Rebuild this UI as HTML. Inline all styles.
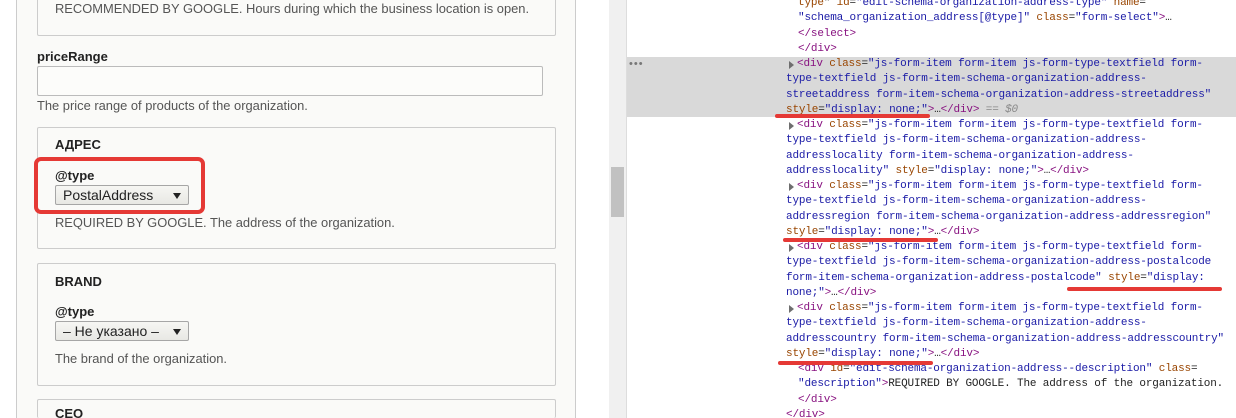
<!DOCTYPE html>
<html><head><meta charset="utf-8"><style>
*{margin:0;padding:0;box-sizing:border-box}
html,body{width:1236px;height:418px;overflow:hidden}
body{background:#fff;position:relative;font-family:"Liberation Sans","DejaVu Sans",sans-serif}
.abs{position:absolute}
#left{left:16px;top:0;width:560px;height:418px;background:#fafaf8;border-left:1px solid #ccc;border-right:1px solid #ccc}
.fs{position:absolute;left:37px;width:519px;border:1px solid #ccc;border-radius:2px;background:#fafaf8}
.t{position:absolute;font-size:12.9px;color:#555;white-space:nowrap;line-height:14px}
.b{position:absolute;font-size:13px;font-weight:bold;color:#222;white-space:nowrap;line-height:15px}
.sel{position:absolute;left:55px;width:134px;height:20px;border:1px solid #a6a6a6;border-radius:2px;background:linear-gradient(#f6f6f3,#e8e8e4);font-size:14px;color:#222;line-height:18px;padding-left:7px;white-space:nowrap}
.sel:after{content:"";position:absolute;right:7px;top:7px;border-left:4px solid transparent;border-right:4px solid transparent;border-top:6px solid #222}
#code{position:absolute;left:0;top:-4px;width:1236px;height:422px;overflow:hidden;font-family:"Liberation Mono","DejaVu Sans Mono",monospace;font-size:11px;letter-spacing:-0.16px;line-height:15.25px;color:#222}
#code div{height:15.25px;position:relative;white-space:pre}
.tg{color:#881280}.an{color:#994500}.av{color:#1a1aa6}.gr{color:#888;font-style:italic}
.tri{position:absolute;left:-8px;top:4px;border-top:4px solid transparent;border-bottom:4px solid transparent;border-left:5px solid #6e6e6e}
.ul{position:absolute;height:4px;background:#e53935;border-radius:2px}
</style></head><body>
<div id="left" class="abs"></div>
<div class="fs" style="top:-10px;height:46px"></div>
<div class="t" style="left:55px;top:2px">RECOMMENDED BY GOOGLE. Hours during which the business location is open.</div>
<div class="b" style="left:37px;top:49px">priceRange</div>
<div class="abs" style="left:37px;top:66px;width:506px;height:30px;border:1px solid #bbb;border-radius:2px;background:#fcfcfa"></div>
<div class="t" style="left:37px;top:99px">The price range of products of the organization.</div>
<div class="fs" style="top:127px;height:122px"></div>
<div class="b" style="left:55px;top:137px">АДРЕС</div>
<div class="b" style="left:55px;top:168px">@type</div>
<div class="sel" style="top:185px">PostalAddress</div>
<div class="abs" style="left:34px;top:157px;width:171px;height:57px;border:4px solid #e53935;border-radius:7px"></div>
<div class="t" style="left:55px;top:216px">REQUIRED BY GOOGLE. The address of the organization.</div>
<div class="fs" style="top:263px;height:123px"></div>
<div class="b" style="left:55px;top:274px">BRAND</div>
<div class="b" style="left:55px;top:304px">@type</div>
<div class="sel" style="top:321px">– Не указано –</div>
<div class="t" style="left:55px;top:352px">The brand of the organization.</div>
<div class="fs" style="top:399px;height:19px;border-bottom:none"></div>
<div class="b" style="left:55px;top:406px">CEO</div>
<div class="abs" style="left:609px;top:0;width:17px;height:418px;background:#f0f0f0"></div>
<div class="abs" style="left:611px;top:167px;width:13px;height:50px;background:#c1c1c1"></div>
<div class="abs" style="left:626px;top:0;width:1px;height:418px;background:#ddd"></div>
<div class="abs" style="left:627px;top:57px;width:609px;height:60px;background:#d9d9d9"></div>
<div class="abs" style="left:629px;top:58px;font-size:11px;color:#777;letter-spacing:1px">•••</div>
<div id="code"><div style="left:798px"><span class="an">type</span>" <span class="an">id</span>=<span class="av">"edit-schema-organization-address-type"</span> <span class="an">name</span>=</div><div style="left:798px"><span class="av">"schema_organization_address[@type]"</span> <span class="an">class</span>=<span class="av">"form-select"</span><span class="tg">&gt;</span>…</div><div style="left:798px"><span class="tg">&lt;/select&gt;</span></div><div style="left:798px"><span class="tg">&lt;/div&gt;</span></div><div style="left:797px"><i class="tri"></i><span class="tg">&lt;div</span> <span class="an">class</span>=<span class="av">"js-form-item form-item js-form-type-textfield form-</span></div><div style="left:786px"><span class="av">type-textfield js-form-item-schema-organization-address-</span></div><div style="left:786px"><span class="av">streetaddress form-item-schema-organization-address-streetaddress"</span></div><div style="left:786px"><span class="an">style</span>=<span class="av">"display: none;"</span><span class="tg">&gt;</span>…<span class="tg">&lt;/div&gt;</span> <span class="gr">== $0</span></div><div style="left:797px"><i class="tri"></i><span class="tg">&lt;div</span> <span class="an">class</span>=<span class="av">"js-form-item form-item js-form-type-textfield form-</span></div><div style="left:786px"><span class="av">type-textfield js-form-item-schema-organization-address-</span></div><div style="left:786px"><span class="av">addresslocality form-item-schema-organization-address-</span></div><div style="left:786px"><span class="av">addresslocality"</span> <span class="an">style</span>=<span class="av">"display: none;"</span><span class="tg">&gt;</span>…<span class="tg">&lt;/div&gt;</span></div><div style="left:797px"><i class="tri"></i><span class="tg">&lt;div</span> <span class="an">class</span>=<span class="av">"js-form-item form-item js-form-type-textfield form-</span></div><div style="left:786px"><span class="av">type-textfield js-form-item-schema-organization-address-</span></div><div style="left:786px"><span class="av">addressregion form-item-schema-organization-address-addressregion"</span></div><div style="left:786px"><span class="an">style</span>=<span class="av">"display: none;"</span><span class="tg">&gt;</span>…<span class="tg">&lt;/div&gt;</span></div><div style="left:797px"><i class="tri"></i><span class="tg">&lt;div</span> <span class="an">class</span>=<span class="av">"js-form-item form-item js-form-type-textfield form-</span></div><div style="left:786px"><span class="av">type-textfield js-form-item-schema-organization-address-postalcode</span></div><div style="left:786px"><span class="av">form-item-schema-organization-address-postalcode"</span> <span class="an">style</span>=<span class="av">"display:</span></div><div style="left:786px"><span class="av">none;"</span><span class="tg">&gt;</span>…<span class="tg">&lt;/div&gt;</span></div><div style="left:797px"><i class="tri"></i><span class="tg">&lt;div</span> <span class="an">class</span>=<span class="av">"js-form-item form-item js-form-type-textfield form-</span></div><div style="left:786px"><span class="av">type-textfield js-form-item-schema-organization-address-</span></div><div style="left:786px"><span class="av">addresscountry form-item-schema-organization-address-addresscountry"</span></div><div style="left:786px"><span class="an">style</span>=<span class="av">"display: none;"</span><span class="tg">&gt;</span>…<span class="tg">&lt;/div&gt;</span></div><div style="left:798px"><span class="tg">&lt;div</span> <span class="an">id</span>=<span class="av">"edit-schema-organization-address--description"</span> <span class="an">class</span>=</div><div style="left:798px"><span class="av">"description"</span><span class="tg">&gt;</span>REQUIRED BY GOOGLE. The address of the organization.</div><div style="left:798px"><span class="tg">&lt;/div&gt;</span></div><div style="left:786px"><span class="tg">&lt;/div&gt;</span></div></div>
<div class="ul" style="left:775px;top:114px;width:155px"></div>
<div class="ul" style="left:783px;top:238px;width:155px"></div>
<div class="ul" style="left:1067px;top:287px;width:155px"></div>
<div class="ul" style="left:778px;top:361px;width:155px"></div>
</body></html>
